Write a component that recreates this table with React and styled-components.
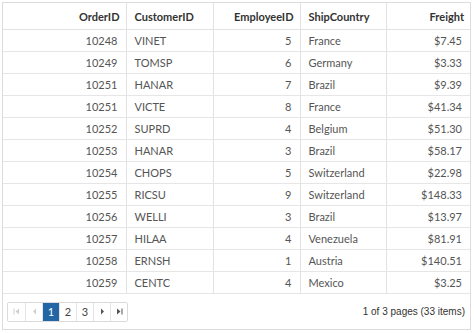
import React from "react";
import styled, { createGlobalStyle } from "styled-components";

const Global = createGlobalStyle`
  html, body { margin: 0; padding: 0; background: #fff; }
  body { font-family: Lato, "Open Sans", sans-serif; }
`;

const Page = styled.div`
  padding: 2px 3px 0 2px;
`;

const Grid = styled.div`
  border: 1px solid #dcdcdc;
  width: 469px;
  box-sizing: border-box;
`;

const Table = styled.table`
  width: 100%;
  border-collapse: collapse;
  table-layout: fixed;
`;

const Th = styled.th`
  height: 26px;
  padding: 0 6px 0 8px;
  font-size: 11px;
  font-weight: 700;
  color: #333;
  text-align: ${(p) => (p.$right ? "right" : "left")};
  border-left: ${(p) => (p.$first ? "none" : "1px solid #e2e2e2")};
  border-bottom: 1px solid #e2e2e2;
  background: #fff;
  white-space: nowrap;
`;

const Td = styled.td`
  height: 21px;
  padding: 0 8px;
  font-size: 11px;
  color: #555;
  text-align: ${(p) => (p.$right ? "right" : "left")};
  border-left: ${(p) => (p.$first ? "none" : "1px solid #e2e2e2")};
  border-bottom: 1px solid #e6e6e6;
  white-space: nowrap;
  overflow: hidden;
`;

const Pager = styled.div`
  height: 35px;
  display: flex;
  align-items: center;
  justify-content: space-between;
  padding: 0 4px 0 4px;
  background: #fff;
`;

const Buttons = styled.div`
  display: flex;
  border: 1px solid #dadada;
  border-radius: 2px;
  height: 18px;
`;

const Btn = styled.div`
  width: 17px;
  height: 18px;
  display: flex;
  align-items: center;
  justify-content: center;
  font-size: 11px;
  box-sizing: border-box;
  border-left: ${(p) => (p.$first ? "none" : "1px solid #e4e4e4")};
  background: ${(p) => (p.$active ? "#2266a5" : "#fff")};
  color: ${(p) => (p.$active ? "#fff" : p.$disabled ? "#c8c8c8" : "#444")};
`;

const Info = styled.div`
  font-family: "Liberation Sans", Arial, sans-serif;
  font-size: 10px;
  color: #333;
  padding-right: 1px;
`;

const Icon = ({ type, color }) => {
  const c = color;
  if (type === "first")
    return (
      <svg width="7" height="7" viewBox="0 0 7 7">
        <rect x="0.5" y="0.5" width="1" height="6" fill={c} />
        <path d="M6 0.5 L2.5 3.5 L6 6.5 Z" fill={c} />
      </svg>
    );
  if (type === "prev")
    return (
      <svg width="5" height="7" viewBox="0 0 5 7">
        <path d="M4 0.5 L1 3.5 L4 6.5 Z" fill={c} />
      </svg>
    );
  if (type === "next")
    return (
      <svg width="5" height="7" viewBox="0 0 5 7">
        <path d="M1 0.5 L4 3.5 L1 6.5 Z" fill={c} />
      </svg>
    );
  return (
    <svg width="7" height="7" viewBox="0 0 7 7">
      <path d="M1 0.5 L4.5 3.5 L1 6.5 Z" fill={c} />
      <rect x="5.5" y="0.5" width="1" height="6" fill={c} />
    </svg>
  );
};

const rows = [
  [10248, "VINET", 5, "France", "$7.45"],
  [10249, "TOMSP", 6, "Germany", "$3.33"],
  [10251, "HANAR", 7, "Brazil", "$9.39"],
  [10251, "VICTE", 8, "France", "$41.34"],
  [10252, "SUPRD", 4, "Belgium", "$51.30"],
  [10253, "HANAR", 3, "Brazil", "$58.17"],
  [10254, "CHOPS", 5, "Switzerland", "$22.98"],
  [10255, "RICSU", 9, "Switzerland", "$148.33"],
  [10256, "WELLI", 3, "Brazil", "$13.97"],
  [10257, "HILAA", 4, "Venezuela", "$81.91"],
  [10258, "ERNSH", 1, "Austria", "$140.51"],
  [10259, "CENTC", 4, "Mexico", "$3.25"],
];

export default function App() {
  return (
    <Page>
      <Global />
      <Grid>
        <Table>
          <colgroup>
            <col style={{ width: 123 }} />
            <col style={{ width: 87 }} />
            <col style={{ width: 87 }} />
            <col style={{ width: 86 }} />
            <col />
          </colgroup>
          <thead>
            <tr>
              <Th $first $right>OrderID</Th>
              <Th>CustomerID</Th>
              <Th $right>EmployeeID</Th>
              <Th>ShipCountry</Th>
              <Th $right>Freight</Th>
            </tr>
          </thead>
          <tbody>
            {rows.map((r, i) => (
              <tr key={i}>
                <Td $first $right>{r[0]}</Td>
                <Td>{r[1]}</Td>
                <Td $right>{r[2]}</Td>
                <Td>{r[3]}</Td>
                <Td $right>{r[4]}</Td>
              </tr>
            ))}
          </tbody>
        </Table>
        <Pager>
          <Buttons>
            <Btn $first $disabled><Icon type="first" color="#cfcfcf" /></Btn>
            <Btn $disabled><Icon type="prev" color="#cfcfcf" /></Btn>
            <Btn $active>1</Btn>
            <Btn>2</Btn>
            <Btn>3</Btn>
            <Btn><Icon type="next" color="#555" /></Btn>
            <Btn><Icon type="last" color="#555" /></Btn>
          </Buttons>
          <Info>1 of 3 pages (33 items)</Info>
        </Pager>
      </Grid>
    </Page>
  );
}
